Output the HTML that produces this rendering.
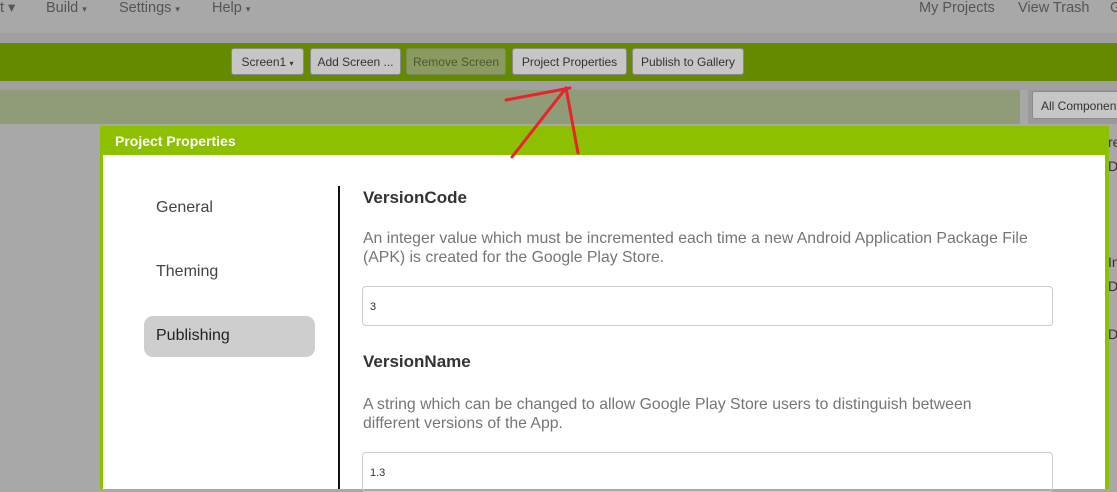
<!DOCTYPE html>
<html><head><style>
body{margin:0;width:1117px;height:489px;overflow:hidden;background:#a8a8a8;font-family:"Liberation Sans",sans-serif;position:relative}
.a{position:absolute;white-space:nowrap}
.nav{color:#555;font-size:14.5px;top:0}
.btn{position:absolute;white-space:nowrap;overflow:hidden;top:48px;height:27px;background:#c6c6c6;border:1px solid #8a8a8a;border-radius:3px;font-size:12px;color:#333;line-height:27px;text-align:center;box-sizing:border-box}
.lbl{font-size:16px;color:#444}
.h{font-size:17px;font-weight:bold;color:#333}
.d{font-size:15.8px;color:#757575;line-height:19px}
.inp{position:absolute;left:362px;width:691px;height:40px;border:1px solid #ccc;border-radius:4px;box-sizing:border-box;font-size:11px;color:#333;padding:14px 0 0 7px}
</style></head><body>
<div class="a nav" style="left:0">t ▾</div>
<div class="a nav" style="left:46px">Build <span style="font-size:9px">▾</span></div>
<div class="a nav" style="left:119px">Settings <span style="font-size:9px">▾</span></div>
<div class="a nav" style="left:212px">Help <span style="font-size:9px">▾</span></div>
<div class="a nav" style="left:919px">My Projects</div>
<div class="a nav" style="left:1018px">View Trash</div>
<div class="a nav" style="left:1110px">G</div>
<div class="a" style="left:0;top:33px;width:1117px;height:10px;background:#a0a0a0"></div>
<div class="a" style="left:0;top:43px;width:1117px;height:38px;background:#658a00"></div>
<div class="a" style="left:0;top:81px;width:1117px;height:9px;background:#a0a0a0"></div>
<div class="a" style="left:0;top:90px;width:1020px;height:34px;background:#8f9c77"></div>
<div class="a" style="left:1028px;top:90px;width:89px;height:34px;background:#9a9a9a"></div>
<div class="btn" style="left:231px;width:73px">Screen1 <span style="font-size:8px">▾</span></div>
<div class="btn" style="left:310px;width:91px">Add Screen ...</div>
<div class="btn" style="left:406px;width:100px;background:#8a9a60;border-color:#7a8a55;color:#4a5a30">Remove Screen</div>
<div class="btn" style="left:512px;width:115px">Project Properties</div>
<div class="btn" style="left:632px;width:112px">Publish to Gallery</div>
<div class="btn" style="left:1032px;top:91px;width:90px;height:28px;line-height:28px;text-align:left;padding-left:8px">All Components</div>
<div class="a" style="left:1108px;top:130px;font-size:14px;color:#333;line-height:24px">re<br>D<br><br><br><br>In<br>D<br><br>D</div>
<div class="a" style="left:100px;top:126px;width:1009px;height:363px;background:#8cc000"></div>
<div class="a" style="left:115px;top:133px;color:#fff;font-weight:bold;font-size:14px">Project Properties</div>
<div class="a" style="left:103px;top:155px;width:1002px;height:334px;background:#fff"></div>
<div class="a lbl" style="left:156px;top:199px">General</div>
<div class="a lbl" style="left:156px;top:263px">Theming</div>
<div class="a" style="left:144px;top:316px;width:171px;height:41px;background:#cecece;border-radius:9px"></div>
<div class="a lbl" style="left:156px;top:327px;color:#222">Publishing</div>
<div class="a" style="left:338px;top:186px;width:2px;height:303px;background:#111"></div>
<div class="a h" style="left:363px;top:188px">VersionCode</div>
<div class="a d" style="left:363px;top:229px">An integer value which must be incremented each time a new Android Application Package File<br>(APK) is created for the Google Play Store.</div>
<div class="inp" style="top:286px">3</div>
<div class="a h" style="left:363px;top:352px">VersionName</div>
<div class="a d" style="left:363px;top:395px">A string which can be changed to allow Google Play Store users to distinguish between<br>different versions of the App.</div>
<div class="inp" style="top:452px">1.3</div>
<svg class="a" style="left:0;top:0" width="1117" height="489"><g stroke="#e8232a" stroke-width="3" fill="none" stroke-linecap="round"><path d="M512 157 L566 88"/><path d="M506 100 L570 88"/><path d="M566 88 L578 153"/></g></svg>
</body></html>
